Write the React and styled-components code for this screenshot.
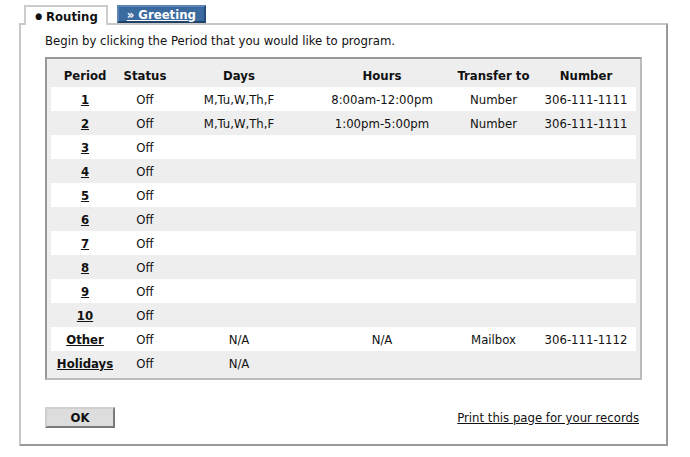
import React from "react";
import styled, { createGlobalStyle } from "styled-components";

const GlobalStyle = createGlobalStyle`
  body {
    margin: 0;
    background: #fff;
    font-family: "DejaVu Sans Condensed", "DejaVu Sans", Verdana, sans-serif;
    font-size: 13px;
    color: #111;
  }
`;

const periods = [
  { name: "1", status: "Off", days: "M,Tu,W,Th,F", hours: "8:00am-12:00pm", transfer: "Number", number: "306-111-1111" },
  { name: "2", status: "Off", days: "M,Tu,W,Th,F", hours: "1:00pm-5:00pm", transfer: "Number", number: "306-111-1111" },
  { name: "3", status: "Off" },
  { name: "4", status: "Off" },
  { name: "5", status: "Off" },
  { name: "6", status: "Off" },
  { name: "7", status: "Off" },
  { name: "8", status: "Off" },
  { name: "9", status: "Off" },
  { name: "10", status: "Off" },
  { name: "Other", status: "Off", days: "N/A", hours: "N/A", transfer: "Mailbox", number: "306-111-1112" },
  { name: "Holidays", status: "Off", days: "N/A" },
];

const App = () => {
  return (
    <Page>
      <GlobalStyle />
      <Tabs>
        <Tab active>
          <span className="dot">●</span> Routing
        </Tab>
        <Tab>
          <a href="#greeting">» Greeting</a>
        </Tab>
      </Tabs>
      <Panel>
        <Intro>Begin by clicking the Period that you would like to program.</Intro>
        <Frame>
          <Row header>
            <Cell>Period</Cell>
            <Cell>Status</Cell>
            <Cell>Days</Cell>
            <Cell>Hours</Cell>
            <Cell>Transfer to</Cell>
            <Cell>Number</Cell>
          </Row>
          {periods.map((p, index) => (
            <Row key={p.name} striped={index % 2 === 0}>
              <Cell>
                <PeriodLink href={`#period-${p.name}`}>{p.name}</PeriodLink>
              </Cell>
              <Cell>{p.status}</Cell>
              <Cell>{p.days}</Cell>
              <Cell>{p.hours}</Cell>
              <Cell>{p.transfer}</Cell>
              <Cell>{p.number}</Cell>
            </Row>
          ))}
        </Frame>
        <Footer>
          <OkButton>OK</OkButton>
          <PrintLink href="#print">Print this page for your records</PrintLink>
        </Footer>
      </Panel>
    </Page>
  );
};

export default App;

const Page = styled.div`
  padding: 5px 0 0 19px;
  width: 649px;
`;

const Tabs = styled.div`
  display: flex;
  align-items: flex-end;
  gap: 9px;
  padding-left: 5px;
  position: relative;
  z-index: 1;
`;

const Tab = styled.div`
  box-sizing: border-box;
  height: ${({ active }) => (active ? "20px" : "18px")};
  margin-bottom: ${({ active }) => (active ? "-2px" : "0")};
  padding: 0 8px 0 ${({ active }) => (active ? "9px" : "8px")};
  display: flex;
  align-items: center;
  font-weight: bold;
  font-size: 13px;
  background: ${({ active }) => (active ? "#fff" : "#3a6a9e")};
  border: 2px solid ${({ active }) => (active ? "#cccccc" : "#264d7a")};
  border-bottom: ${({ active }) => (active ? "none" : "2px solid #1f4168")};
  border-top-color: ${({ active }) => (active ? "#cccccc" : "#5b86b8")};
  border-left-color: ${({ active }) => (active ? "#cccccc" : "#5b86b8")};
  .dot {
    font-size: 9px;
    margin-right: 4px;
  }
  a {
    color: #fff;
    font-style: normal;
    text-decoration: underline;
  }
`;

const Panel = styled.div`
  border: 2px solid #999;
  border-top-color: #c8c8c8;
  border-left-color: #c8c8c8;
  padding: 8px 24px 16px 24px;
`;

const Intro = styled.p`
  margin: 0 0 8px;
  line-height: 16px;
`;

const Frame = styled.div`
  background: #eeeeee;
  border: 2px solid #bbb;
  border-top-color: #999;
  border-left-color: #999;
  padding: 4px 4px 3px;
`;

const Row = styled.div`
  display: grid;
  grid-template-columns: 68px 52px 136px 150px 73px 1fr;
  height: 24px;
  align-items: center;
  background: ${({ striped }) => (striped ? "#fff" : "transparent")};
  font-weight: ${({ header }) => (header ? "bold" : "normal")};
`;

const Cell = styled.div`
  justify-self: center;
  white-space: nowrap;
  &:last-child {
    padding-left: 6px;
  }
`;

const PeriodLink = styled.a`
  color: #111;
  font-weight: bold;
  text-decoration: underline;
`;

const Footer = styled.div`
  display: flex;
  justify-content: space-between;
  align-items: center;
  margin-top: 27px;
  padding-right: 3px;
`;

const OkButton = styled.button`
  box-sizing: border-box;
  width: 70px;
  height: 21px;
  font-family: inherit;
  font-size: 13px;
  font-weight: bold;
  color: #111;
  background: #dddddd;
  border: 2px solid #7a7a7a;
  border-top-color: #cfcfcf;
  border-left-color: #cfcfcf;
  padding: 0;
`;

const PrintLink = styled.a`
  color: #111;
  text-decoration: underline;
`;
